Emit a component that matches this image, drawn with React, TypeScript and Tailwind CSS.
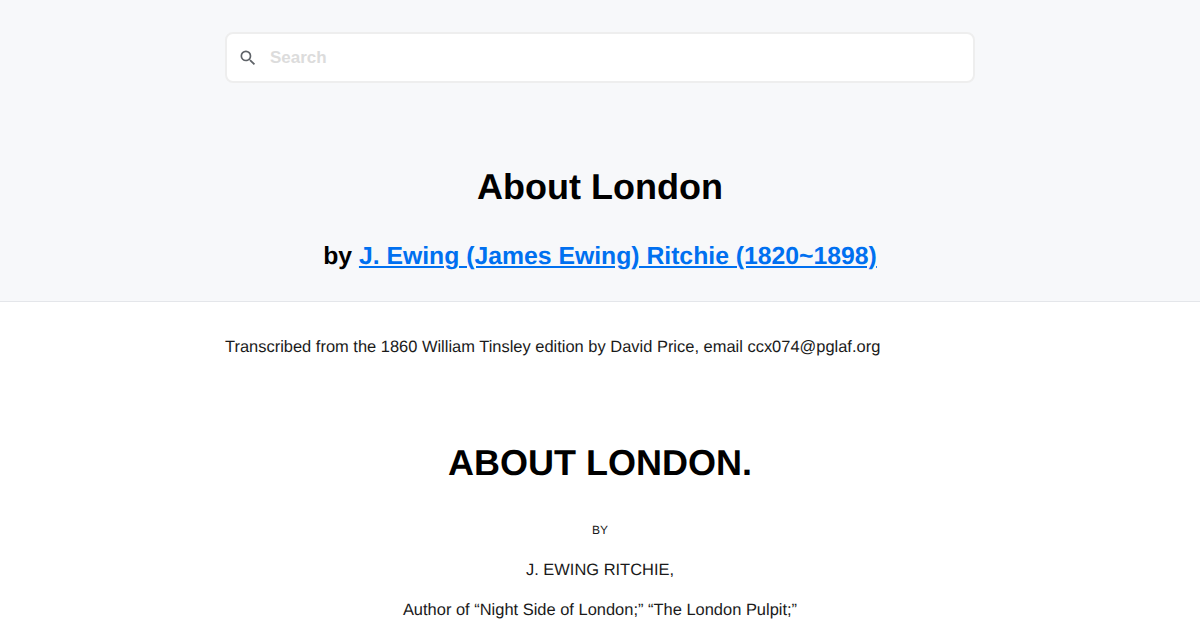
export default function App() {
  return (
    <div className="font-['Liberation_Sans',Arial,sans-serif] text-[#1a1a1a] bg-white h-[628px] overflow-hidden [text-rendering:geometricPrecision]">
      <header className="bg-[#f7f8fa] border-b border-[#e4e6ea] h-[302px] pt-8">
        <div className="w-[750px] mx-auto">
          <div className="h-[51px] bg-white border-2 border-[#eeeeee] rounded-lg flex items-center pl-[11px]">
            <svg viewBox="0 0 24 24" className="w-[20px] h-[20px] fill-[#5f6368]">
              <path d="M15.5 14h-.79l-.28-.27A6.47 6.47 0 0 0 16 9.5 6.5 6.5 0 1 0 9.5 16c1.61 0 3.09-.59 4.23-1.57l.27.28v.79l5 4.99L20.49 19l-4.99-5zm-6 0C7.01 14 5 11.99 5 9.5S7.01 5 9.5 5 14 7.01 14 9.5 11.99 14 9.5 14z" />
            </svg>
            <input
              placeholder="Search"
              className="ml-[12px] flex-1 outline-none text-[17px] font-bold placeholder:text-[#dcdcdc]"
            />
          </div>
        </div>
        <h1 className="mt-[82px] text-center text-[36px] leading-[44px] font-bold text-black">About London</h1>
        <h2 className="mt-[32px] text-center text-[24.75px] leading-[32px] font-bold text-black">
          by{" "}
          <a href="#" className="text-[#0070f0] underline">
            J. Ewing (James Ewing) Ritchie (1820~1898)
          </a>
        </h2>
      </header>
      <main className="w-[750px] mx-auto">
        <p className="mt-[33px] text-[16.47px] leading-[24px]">
          Transcribed from the 1860 William Tinsley edition by David Price, email ccx074@pglaf.org
        </p>
        <h2 className="mt-[82px] text-center text-[36px] leading-[44px] font-bold text-black">ABOUT LONDON.</h2>
        <p className="mt-[36px] text-center text-[12px] leading-[18px]">BY</p>
        <p className="mt-[19px] text-center text-[16.47px] leading-[24px]">J. EWING RITCHIE,</p>
        <p className="mt-[16px] text-center text-[16.47px] leading-[24px]">
          Author of “Night Side of London;” “The London Pulpit;”
        </p>
      </main>
    </div>
  );
}
